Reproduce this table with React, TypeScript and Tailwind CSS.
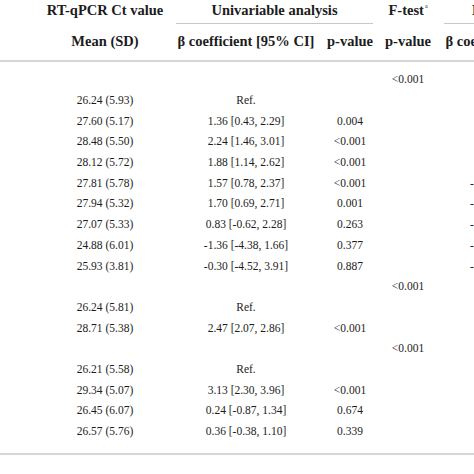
import React from "react";

type Row = { m?: string; b?: string; p?: string; f?: string; d?: boolean };

const rows: Row[] = [
  { f: "<0.001" },
  { m: "26.24 (5.93)", b: "Ref." },
  { m: "27.60 (5.17)", b: "1.36 [0.43, 2.29]", p: "0.004" },
  { m: "28.48 (5.50)", b: "2.24 [1.46, 3.01]", p: "<0.001" },
  { m: "28.12 (5.72)", b: "1.88 [1.14, 2.62]", p: "<0.001" },
  { m: "27.81 (5.78)", b: "1.57 [0.78, 2.37]", p: "<0.001", d: true },
  { m: "27.94 (5.32)", b: "1.70 [0.69, 2.71]", p: "0.001", d: true },
  { m: "27.07 (5.33)", b: "0.83 [-0.62, 2.28]", p: "0.263", d: true },
  { m: "24.88 (6.01)", b: "-1.36 [-4.38, 1.66]", p: "0.377", d: true },
  { m: "25.93 (3.81)", b: "-0.30 [-4.52, 3.91]", p: "0.887", d: true },
  { f: "<0.001" },
  { m: "26.24 (5.81)", b: "Ref." },
  { m: "28.71 (5.38)", b: "2.47 [2.07, 2.86]", p: "<0.001" },
  { f: "<0.001" },
  { m: "26.21 (5.58)", b: "Ref." },
  { m: "29.34 (5.07)", b: "3.13 [2.30, 3.96]", p: "<0.001" },
  { m: "26.45 (6.07)", b: "0.24 [-0.87, 1.34]", p: "0.674" },
  { m: "26.57 (5.76)", b: "0.36 [-0.38, 1.10]", p: "0.339" },
];

export default function App() {
  return (
    <div className="w-[474px] h-[474px] overflow-hidden bg-white text-[#1c1c1c] font-[family-name:'Liberation_Serif','Times_New_Roman',serif]">
      <div className="w-[700px]">
        {/* Header row 1 */}
        <div className="flex h-[24px] text-[14.5px] font-bold leading-[17px]">
          <div className="w-[34px] shrink-0" />
          <div className="w-[142px] shrink-0 text-center pt-[2px]">RT-qPCR Ct value</div>
          <div className="w-[208px] shrink-0 pr-[11px]">
            <div className="h-full border-b border-[#c8c8c8] text-center pt-[2px]">Univariable analysis</div>
          </div>
          <div className="w-[48px] shrink-0 text-center pt-[2px] whitespace-nowrap">
            F-test<sup className="text-[6px] font-normal align-top relative top-[4px] ml-[1px]">a</sup>
          </div>
          <div className="w-[12px] shrink-0" />
          <div className="w-[208px] shrink-0">
            <div className="h-full border-b border-[#c8c8c8] pl-[28px] pt-[2px] whitespace-nowrap">Multivariable analysis</div>
          </div>
        </div>
        {/* Header row 2 */}
        <div className="flex h-[36px] text-[14.5px] font-bold leading-[17px] whitespace-nowrap">
          <div className="w-[34px] shrink-0" />
          <div className="w-[142px] shrink-0 text-center pt-[9px]">Mean (SD)</div>
          <div className="w-[140px] shrink-0 text-center pt-[9px]">β coefficient [95% CI]</div>
          <div className="w-[68px] shrink-0 text-center pt-[9px]">p-value</div>
          <div className="w-[48px] shrink-0 text-center pt-[9px]">p-value</div>
          <div className="w-[12px] shrink-0" />
          <div className="w-[140px] shrink-0 text-center pt-[9px]">β coefficient [95% CI]</div>
          <div className="w-[68px] shrink-0 text-center pt-[9px]">p-value</div>
        </div>
        <div className="h-[2px] w-[474px] bg-[#d6d6d6]" />
        {/* Body */}
        <div className="mt-[7px] text-[11.5px] leading-[14px] whitespace-nowrap">
          {rows.map((r, i) => (
            <div key={i} className="flex h-[20.7px] items-center">
              <div className="w-[34px] shrink-0" />
              <div className="w-[142px] shrink-0 text-center">{r.m ?? ""}</div>
              <div className="w-[140px] shrink-0 text-center">{r.b ?? ""}</div>
              <div className="w-[68px] shrink-0 text-center">{r.p ?? ""}</div>
              <div className="w-[48px] shrink-0 text-center">{r.f ?? ""}</div>
              <div className="w-[12px] shrink-0" />
              <div className="w-[140px] shrink-0 pl-[26px]">{r.d ? "-" : ""}</div>
            </div>
          ))}
        </div>
        <div className="mt-[12px] h-[2px] w-[474px] bg-[#d6d6d6]" />
      </div>
    </div>
  );
}
